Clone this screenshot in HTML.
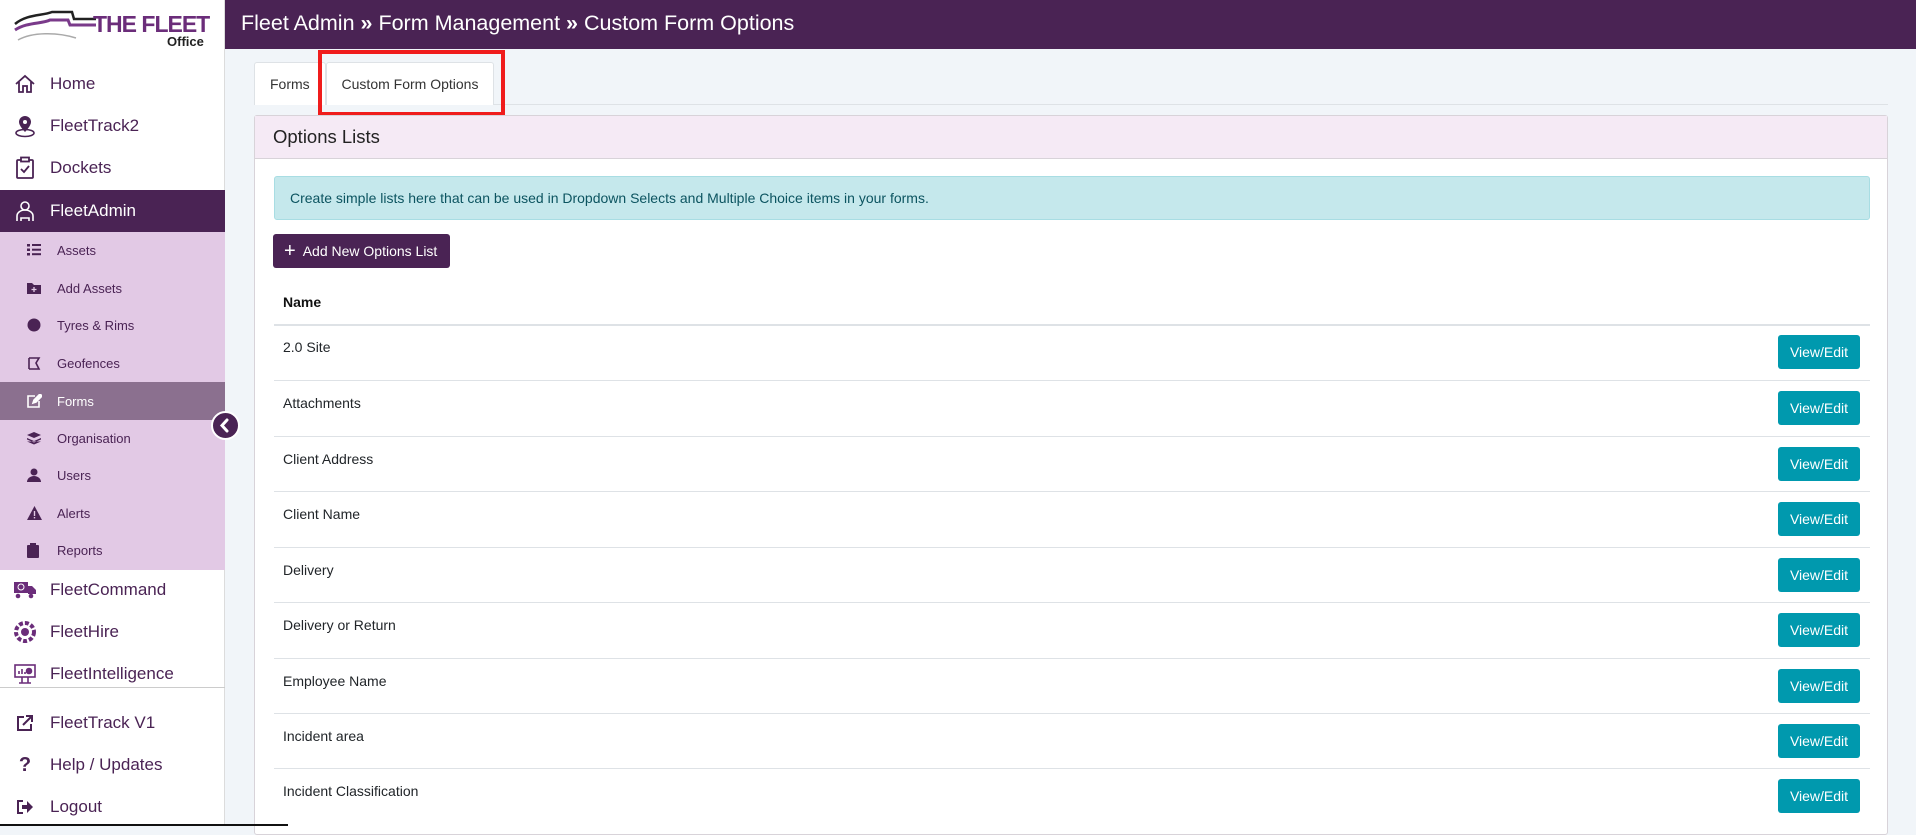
<!DOCTYPE html>
<html><head><meta charset="utf-8"><style>
*{box-sizing:border-box;margin:0;padding:0}
body{width:1916px;height:826px;overflow:hidden;background:#f1f5f9;font-family:"Liberation Sans",Arial,sans-serif;position:relative}
.abs{position:absolute}
#side{left:0;top:0;width:225px;height:826px;background:#fff;border-right:1px solid #dcdcdc}
.mi{position:absolute;left:0;width:225px;height:42px;display:flex;align-items:center;color:#4a2354;font-size:17px}
.mi .ic{width:50px;display:flex;justify-content:center;align-items:center}
.sub{position:absolute;left:0;width:225px;height:38px;display:flex;align-items:center;color:#4a2354;font-size:13px}
.sub .ic{width:57px;padding-left:27px;display:flex;align-items:center}
#hdr{left:225px;top:0;width:1691px;height:49px;background:#4a2354;color:#fff;font-size:21.5px;padding-left:16px;line-height:47px;white-space:nowrap}
.row{position:absolute;left:274px;width:1596px;height:55px;border-top:1px solid #dee2e6;font-size:14px;color:#212529}
.row .t{position:absolute;left:9px;top:14px}
.row .b{position:absolute;right:10px;top:10px;width:82px;height:34px;background:#0099ae;color:#fff;border-radius:3px;font-size:14px;text-align:center;line-height:34px}
.tab{position:absolute;top:62px;height:43px;background:#fff;border:1px solid #dee2e6;border-bottom:none;border-radius:3px 3px 0 0;font-size:14px;color:#333;line-height:42px;white-space:nowrap}
</style></head><body>
<div id="side" class="abs">
  <div class="abs" style="left:12px;top:8px;width:200px;height:40px">
    <svg width="84" height="36" class="abs" style="left:0;top:0"><path d="M3 16 C15 6,30 8,40 4 L60 4 L62 11 L84 11" stroke="#222" stroke-width="2.5" fill="none"/><path d="M3 22 C15 14,30 16,38 12 L56 12 L58 17 L84 17" stroke="#7a3a8a" stroke-width="3" fill="none"/><path d="M6 32 C20 24,45 24,64 30" stroke="#aaa" stroke-width="1.5" fill="none"/></svg>
    <div class="abs" style="left:81px;top:3px;font-size:23px;font-weight:bold;color:#6b2d7a;letter-spacing:-1px">THE FLEET</div>
    <div class="abs" style="left:155px;top:26px;font-size:13px;font-weight:bold;color:#222">Office</div>
  </div>
  <div class="mi" style="top:63px"><div class="ic"><svg width="22" height="22" viewBox="0 0 22 22" fill="none" stroke="#4a2354" stroke-width="1.8"><path d="M2 11 L11 3 L20 11 M5 9 V19 H9 V13 H13 V19 H17 V9"/></svg></div><span>Home</span></div>
  <div class="mi" style="top:105px"><div class="ic"><svg width="22" height="24" viewBox="0 0 22 24"><path d="M11 2a6 6 0 0 1 6 6c0 4-6 10-6 10S5 12 5 8a6 6 0 0 1 6-6z" fill="#4a2354"/><circle cx="11" cy="8" r="2" fill="#fff"/><ellipse cx="11" cy="19" rx="9" ry="3.5" fill="none" stroke="#4a2354" stroke-width="1.6"/></svg></div><span>FleetTrack2</span></div>
  <div class="mi" style="top:147px"><div class="ic"><svg width="20" height="24" viewBox="0 0 20 24" fill="none" stroke="#4a2354" stroke-width="1.8"><rect x="2" y="4" width="16" height="18" rx="1"/><rect x="6" y="1.5" width="8" height="4" fill="#fff"/><path d="M6 13 L9 16 L14 10"/></svg></div><span>Dockets</span></div>
  <div class="mi" style="top:190px;background:#4a2354;color:#fff"><div class="ic"><svg width="20" height="22" viewBox="0 0 20 22" fill="none" stroke="#fff" stroke-width="1.6"><circle cx="10" cy="6" r="4"/><path d="M2 21 V16 a8 6 0 0 1 16 0 V21 M6 21 v-3 h8 v3"/></svg></div><span>FleetAdmin</span></div>
  <div class="abs" style="left:0;top:232px;width:225px;height:338px;background:#e2c9e5"></div>
  <div class="sub" style="top:231px"><div class="ic"><svg width="14" height="12"><g fill="#4a2354"><rect x="0" y="0" width="3" height="2.5"/><rect x="0" y="4.5" width="3" height="2.5"/><rect x="0" y="9" width="3" height="2.5"/><rect x="5" y="0" width="9" height="2"/><rect x="5" y="4.7" width="9" height="2"/><rect x="5" y="9.2" width="9" height="2"/></g></svg></div><span>Assets</span></div>
  <div class="sub" style="top:269px"><div class="ic"><svg width="14" height="12"><path d="M0 1h5l2 2h7v9H0z" fill="#4a2354"/><path d="M7 5v5M4.5 7.5h5" stroke="#e2c9e5" stroke-width="1.3"/></svg></div><span>Add Assets</span></div>
  <div class="sub" style="top:306px"><div class="ic"><svg width="14" height="14"><circle cx="7" cy="7" r="6.5" fill="#4a2354"/></svg></div><span>Tyres &amp; Rims</span></div>
  <div class="sub" style="top:344px"><div class="ic"><svg width="14" height="13" fill="none" stroke="#4a2354" stroke-width="1.6"><path d="M2 1v11M2 1h10l-3 5 3 6H2"/></svg></div><span>Geofences</span></div>
  <div class="sub" style="top:382px;background:#8b708f;color:#fff"><div class="ic"><svg width="15" height="14" fill="none" stroke="#fff" stroke-width="1.6"><path d="M8 2H1v11h11V7"/><path d="M6 9l1-3 6-6 2 2-6 6z" fill="#fff"/></svg></div><span>Forms</span></div>
  <div class="sub" style="top:419px"><div class="ic"><svg width="14" height="13"><path d="M7 0l7 3-7 3-7-3z M0 6l7 3 7-3v1.5l-7 3-7-3z M0 9.5l7 3 7-3" fill="#4a2354"/></svg></div><span>Organisation</span></div>
  <div class="sub" style="top:456px"><div class="ic"><svg width="14" height="14"><circle cx="7" cy="4" r="3.5" fill="#4a2354"/><path d="M0 14a7 6 0 0 1 14 0z" fill="#4a2354"/></svg></div><span>Users</span></div>
  <div class="sub" style="top:494px"><div class="ic"><svg width="15" height="14"><path d="M7.5 0L15 14H0z" fill="#4a2354"/><rect x="6.8" y="5" width="1.4" height="5" fill="#e2c9e5"/><rect x="6.8" y="11" width="1.4" height="1.4" fill="#e2c9e5"/></svg></div><span>Alerts</span></div>
  <div class="sub" style="top:531px"><div class="ic"><svg width="12" height="15"><rect x="0" y="2" width="12" height="13" rx="1" fill="#4a2354"/><rect x="3" y="0" width="6" height="3" fill="#4a2354"/></svg></div><span>Reports</span></div>
  <div class="mi" style="top:569px"><div class="ic"><svg width="24" height="18"><rect x="1" y="1" width="14" height="11" fill="#6b2d7a"/><path d="M15 5h4l4 4v4H15z" fill="#6b2d7a"/><circle cx="5" cy="15" r="2.3" fill="#6b2d7a"/><circle cx="18" cy="15" r="2.3" fill="#6b2d7a"/><circle cx="8" cy="6" r="3" fill="none" stroke="#fff" stroke-width="1"/></svg></div><span>FleetCommand</span></div>
  <div class="mi" style="top:611px"><div class="ic"><svg width="24" height="24" viewBox="0 0 24 24"><circle cx="12" cy="12" r="9" fill="none" stroke="#6b2d7a" stroke-width="4" stroke-dasharray="4 2"/><circle cx="12" cy="12" r="4" fill="#6b2d7a"/></svg></div><span>FleetHire</span></div>
  <div class="mi" style="top:653px"><div class="ic"><svg width="22" height="20" fill="none" stroke="#6b2d7a" stroke-width="1.6"><rect x="1" y="1" width="20" height="12"/><path d="M8 13v6M14 13v6M5 19h12"/><circle cx="15" cy="7" r="2.5" fill="#6b2d7a"/><path d="M5 10V7M8 10V5M11 10V8"/></svg></div><span>FleetIntelligence</span></div>
  <div class="abs" style="left:0;top:687px;width:225px;height:1px;background:#ccc"></div>
  <div class="mi" style="top:702px"><div class="ic"><svg width="18" height="18" fill="none" stroke="#4a2354" stroke-width="2"><path d="M8 3H2v13h13v-6"/><path d="M7 11L16 2M10 2h6v6"/></svg></div><span>FleetTrack V1</span></div>
  <div class="mi" style="top:744px"><div class="ic" style="font-weight:bold;font-size:20px">?</div><span>Help / Updates</span></div>
  <div class="mi" style="top:786px"><div class="ic"><svg width="16" height="14"><path d="M6 1H1v12h5" fill="none" stroke="#4a2354" stroke-width="2"/><path d="M5 5h5V1l6 6-6 6V9H5z" fill="#4a2354"/></svg></div><span>Logout</span></div>
</div>
<div class="abs" style="left:211px;top:411px;width:29px;height:29px;border-radius:50%;background:#4a2354;border:2px solid #fff;z-index:5"><svg width="25" height="25" viewBox="0 0 25 25"><path d="M14 7l-5 5.5 5 5.5" stroke="#fff" stroke-width="3" fill="none" stroke-linecap="round"/></svg></div>
<div id="hdr" class="abs">Fleet Admin <b>&#187;</b> Form Management <b>&#187;</b> Custom Form Options</div>
<div class="abs" style="left:254px;top:104px;width:1634px;height:1px;background:#dee2e6"></div>
<div class="tab" style="left:254px;width:72px;padding-left:15px">Forms</div>
<div class="tab" style="left:326px;width:168px;text-align:center">Custom Form Options</div>
<div class="abs" style="left:318px;top:50px;width:187px;height:66px;border:4px solid #f01c1c"></div>
<div class="abs" style="left:254px;top:115px;width:1634px;height:720px;background:#fff;border:1px solid #d8d3d9;border-radius:3px">
  <div style="height:43px;background:#f5eaf5;border-bottom:1px solid #d8d3d9;font-size:18.5px;color:#222;padding-left:18px;line-height:42px">Options Lists</div>
</div>
<div class="abs" style="left:274px;top:176px;width:1596px;height:44px;background:#c5e8ec;border:1px solid #a8dde3;border-radius:3px;font-size:14px;color:#0c5460;line-height:42px;padding-left:15px;white-space:nowrap">Create simple lists here that can be used in Dropdown Selects and Multiple Choice items in your forms.</div>
<div class="abs" style="left:273px;top:234px;width:177px;height:34px;background:#4a2354;border-radius:3px;color:#fff;font-size:14px;line-height:34px;padding-left:11px;white-space:nowrap"><b style="font-size:20px;font-weight:normal;vertical-align:-1px">+</b>&nbsp; Add New Options List</div>
<div class="abs" style="left:283px;top:294px;font-size:14px;font-weight:bold;color:#111">Name</div>
<div class="abs" style="left:274px;top:324px;width:1596px;height:2px;background:#dee2e6"></div>
<div class="row" style="top:325px;border-top:none"><div class="t">2.0 Site</div><div class="b">View/Edit</div></div>
<div class="row" style="top:380px"><div class="t">Attachments</div><div class="b">View/Edit</div></div>
<div class="row" style="top:436px"><div class="t">Client Address</div><div class="b">View/Edit</div></div>
<div class="row" style="top:491px"><div class="t">Client Name</div><div class="b">View/Edit</div></div>
<div class="row" style="top:547px"><div class="t">Delivery</div><div class="b">View/Edit</div></div>
<div class="row" style="top:602px"><div class="t">Delivery or Return</div><div class="b">View/Edit</div></div>
<div class="row" style="top:658px"><div class="t">Employee Name</div><div class="b">View/Edit</div></div>
<div class="row" style="top:713px"><div class="t">Incident area</div><div class="b">View/Edit</div></div>
<div class="row" style="top:768px"><div class="t">Incident Classification</div><div class="b">View/Edit</div></div>
<div class="abs" style="left:0;top:824px;width:288px;height:2px;background:#111;z-index:10"></div>
</body></html>
